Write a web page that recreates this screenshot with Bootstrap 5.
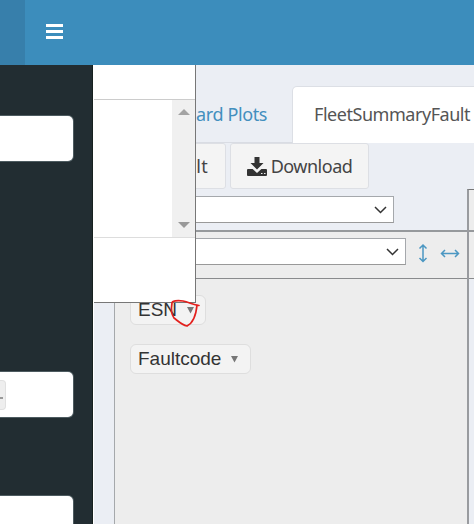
<!DOCTYPE html>
<html lang="en">
<head>
<meta charset="utf-8">
<title>Fleet Summary</title>
<link href="https://cdn.jsdelivr.net/npm/bootstrap@5.3.0/dist/css/bootstrap.min.css" rel="stylesheet">
<style>
body{width:474px;height:524px;font-family:"Noto Sans","Liberation Sans",sans-serif;background:#ebeef4;color:#444}
.topbar{height:65px;background:#3c8dbc}
.brand{width:25px;background:#377fab}
.menu-btn{width:17px;height:15px;margin-left:21px;margin-top:-2px}
.side{width:94px;height:459px;background:#222d32;border-right:1px solid #fff;box-shadow:inset -1px 0 #17211f}
.field{width:73px;height:45px;flex-shrink:0;background:#fff;border-radius:0 5px 5px 0;box-shadow:0 0 0 1px #4d5b60}
.field-1{margin-top:51px}
.field-2{margin-top:211px}
.field-3{margin-top:79px}
.tag-end{width:6px;height:30px;background:#eee;border-radius:0 4px 4px 0;border:1px solid #e0e0e0;border-left:0}
.tag-end i{width:3px;height:2px;background:#999;margin-top:6px}
.main-area{width:380px}
.tabs{height:78px;padding-top:21px;border-bottom:1px solid #d9dce3}
.tabs .nav-link{font-size:18px;line-height:27px;padding:14px 0 0;border-radius:5px 5px 0 0;height:57px;white-space:nowrap;flex-shrink:0}
.tabs .nav-link.tab-a{width:173px;margin-right:25px;padding-top:15px;color:#438fbe;letter-spacing:-.4px;text-align:right}
.nav-tabs .nav-link.tab-b{width:190px;padding-left:21px;background:#fff;border:1px solid #dcdfe5;border-bottom:0;color:#555;letter-spacing:-.46px}
.tool{height:46px;background:#f4f4f4;border:1px solid #dddfe4;border-radius:3px;font-size:18px;color:#444;padding:0;letter-spacing:-.5px}
.tool-a{width:112px;padding-right:17px;text-align:right;letter-spacing:.3px}
.tool-b{width:139px;gap:4px}
.picker{height:27px;border:1px solid #a5a8ac;border-bottom-color:#999;background:#fff;border-radius:0;padding:0 6px 0 0}
.picker-top{width:280px;margin:7px 0 8px 20px}
.pivot{width:355px;height:294px;margin-left:20px;margin-top:-1px;background:#ededed;border-left:1px solid #a5a8ab;border-top:2px solid #96999c}
.agg{height:47px;border-bottom:1px solid #898b8d}
.agg .picker{width:291px;margin-top:6px}
.chips{padding:16px 0 0 15px;gap:19px}
.chip{font-family:"Liberation Sans",Arial,sans-serif;font-size:19px;line-height:28px;height:30px;background:#f3f3f3;border:1px solid #dedede;border-radius:6px;color:#333;padding-left:7px;white-space:nowrap}
.chip-esn{width:76px}
.chip-fault{width:121px}
.chip svg{margin-left:10px}
.vals{left:467px;top:189px;width:7px;height:335px;border-left:2px solid #999b9f;border-top:1px solid #777;background:linear-gradient(#ededed 88px,#898b8d 88px,#898b8d 89px,#ebeef4 89px)}
.vals hr{margin:40px 0 0;border:0;opacity:1;height:2px;background:#96999c}
.pop{left:94px;top:65px;width:102px;height:238px;background:#fff;border-right:1px solid #777;border-bottom:1px solid #777}
.pop-head{height:35px;border-bottom:1px solid #ccc}
.pop-list{height:138px;border-bottom:1px solid #ddd}
.scroller{width:23px;background:#f0f0f0;padding:9px 0}
.pen{left:168px;top:298px}
</style>
<script src="https://cdn.jsdelivr.net/npm/bootstrap@5.3.0/dist/js/bootstrap.bundle.min.js"></script>
</head>
<body class="overflow-hidden position-relative d-flex flex-column">
<header class="topbar d-flex align-items-stretch flex-shrink-0">
  <div class="brand"></div>
  <button class="btn border-0 p-0 rounded-0 menu-btn align-self-center d-flex" aria-label="Menu"><svg width="17" height="15"><path d="M0 1.500h17M0 7.500h17M0 13.500h17" stroke="#fff" stroke-width="3"/></svg></button>
</header>
<div class="d-flex flex-grow-1">
  <aside class="side flex-shrink-0 d-flex flex-column overflow-hidden">
    <div class="field field-1"></div>
    <div class="field field-2 d-flex align-items-center"><span class="tag-end d-flex align-items-center"><i></i></span></div>
    <div class="field field-3"></div>
  </aside>
  <main class="main-area flex-shrink-0">
    <nav class="tabs nav nav-tabs flex-nowrap">
      <a class="nav-link border-0 tab-a" href="#">Standard Plots</a>
      <a class="nav-link active tab-b" href="#">FleetSummaryFault</a>
    </nav>
    <div class="d-flex" style="margin-left:20px;gap:4px">
      <button class="btn tool tool-a">Default</button>
      <button class="btn tool tool-b d-flex align-items-center justify-content-center"><svg width="20" height="19" viewBox="0 0 20 19"><path fill="#333" d="M7.500 0h5v6h4L10 12.600 3.500 6h4zM1 12h4.600L10 16l4.400-4H19q1 0 1 1v5q0 1-1 1H1q-1 0-1-1v-5q0-1 1-1z"/><path d="M14 16.500h1.500M17 16.500h1.500" stroke="#eee"/></svg><span>Download</span></button>
    </div>
    <div class="picker picker-top d-flex align-items-center justify-content-end"><svg width="13" height="8"><path d="M1 1l5.500 5.500L12 1" fill="none" stroke="#333" stroke-width="1.500"/></svg></div>
    <section class="pivot">
      <div class="agg d-flex align-items-start">
        <div class="picker d-flex align-items-center justify-content-end"><svg width="13" height="8"><path d="M1 1l5.500 5.500L12 1" fill="none" stroke="#333" stroke-width="1.500"/></svg></div>
        <svg class="ms-2 mt-2" width="50" height="28" fill="none" stroke="#4b97c2" stroke-width="1.500"><path d="M9 5v16.500M5.500 8.500L9 5 12.500 8.500M5.500 18L9 21.500 12.500 18M27.500 13.500h17M31 10l-3.500 3.500 3.500 3.500M41 10l3.500 3.500-3.500 3.500"/></svg>
      </div>
      <div class="chips d-flex flex-column align-items-start">
        <span class="chip chip-esn d-flex align-items-center">ESN<svg width="8" height="7"><path d="M0 0h7L3.500 6.500z" fill="#777"/></svg></span>
        <span class="chip chip-fault d-flex align-items-center">Faultcode<svg width="8" height="7"><path d="M0 0h7L3.500 6.500z" fill="#777"/></svg></span>
      </div>
    </section>
  </main>
</div>
<div class="vals position-absolute d-flow-root overflow-hidden"><hr></div>
<div class="pop position-absolute">
  <div class="pop-head"></div>
  <div class="pop-list d-flex justify-content-end"><div class="scroller d-flex flex-column align-items-center justify-content-between"><svg width="12" height="6"><path d="M0 6L6 0l6 6z" fill="#a3a3a3"/></svg><svg width="12" height="6"><path d="M0 0h12L6 6z" fill="#999"/></svg></div></div>
</div>
<svg class="pen position-absolute" width="34" height="32"><path d="M31 7.500C25 7 21 4 15 3 9 2 4 3 4 5c-1 6-1 11 2 15 4 3 8 7 13 8 6-3 9-10 10-21" fill="none" stroke="#e3201d" stroke-width="1.700" stroke-linecap="round"/></svg>
</body>
</html>
